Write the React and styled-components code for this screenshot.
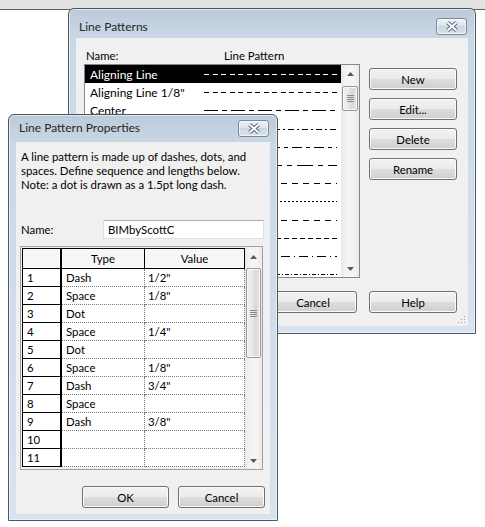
import React from "react";
import styled, { createGlobalStyle } from "styled-components";

const FONT = `"Lato", "Noto Sans", "Liberation Sans", sans-serif`;

const Global = createGlobalStyle`
  html, body { margin: 0; padding: 0; background: #fff; }
  body { width: 485px; height: 527px; overflow: hidden; font-family: ${FONT}; font-size: 11.4px; color: #000; }
  * { box-sizing: border-box; }
`;

const Desktop = styled.div`
  position: relative;
  width: 485px;
  height: 527px;
  background: #fff;
  overflow: hidden;
`;

const BackWindowEdge = styled.div`
  height: 10px;
  background: #e2e2e2;
  border-bottom: 1px solid #5e5e5e;
`;

const Window = styled.div`
  position: absolute;
  left: ${(p) => p.$x}px;
  top: ${(p) => p.$y}px;
  width: ${(p) => p.$w}px;
  height: ${(p) => p.$h}px;
  display: flex;
  flex-direction: column;
  border: 1px solid #4f5660;
  border-radius: 6px 6px 0 0;
  background: linear-gradient(#bccada, #cad7e5 28px, #d7e3ef 100%);
  box-shadow: inset 0 0 0 1px rgba(255, 255, 255, 0.5);
  padding: 0 7px 7px 7px;
`;

const TitleBar = styled.div`
  flex: none;
  height: ${(p) => p.$h}px;
  display: flex;
  align-items: flex-start;
  padding: ${(p) => p.$pt}px 1px 0 3px;
`;

const Title = styled.div`
  flex: 1;
  margin-top: ${(p) => p.$mt || 0}px;
  line-height: 16px;
  font-size: 12px;
  color: #262626;
  white-space: nowrap;
`;

const CloseButton = styled.div`
  width: 31px;
  height: 17px;
  border: 1px solid #7a8799;
  border-radius: 3px;
  background: linear-gradient(#eef2f7, #dde4ed 45%, #ccd6e2 50%, #dbe3ec);
  box-shadow: inset 0 0 0 1px rgba(255, 255, 255, 0.6);
  display: flex;
  align-items: center;
  justify-content: center;
`;

const Client = styled.div`
  position: relative;
  flex: 1;
  background: #f0f0f0;
  display: flex;
  flex-direction: column;
  padding: ${(p) => p.$pad};
`;

const TopArea = styled.div`
  display: flex;
  gap: 9px;
`;

const LeftCol = styled.div`
  width: 276px;
  display: flex;
  flex-direction: column;
`;

const LabelRow = styled.div`
  height: 15px;
  line-height: 14px;
  display: flex;
`;

const ColLabel = styled.div`
  width: ${(p) => p.$w || "auto"};
  padding-left: ${(p) => p.$pl || 0}px;
  white-space: nowrap;
`;

const ListBox = styled.div`
  height: 214px;
  border: 1px solid #828790;
  background: #fff;
  display: flex;
  overflow: hidden;
`;

const ListRows = styled.div`
  flex: 1;
  overflow: hidden;
`;

const ListRow = styled.div`
  height: 18.2px;
  display: flex;
  align-items: center;
  background: ${(p) => (p.$sel ? "#000" : "transparent")};
  color: ${(p) => (p.$sel ? "#fff" : "#000")};
`;

const RowName = styled.div`
  width: 119px;
  padding-left: 5px;
  white-space: nowrap;
  overflow: hidden;
  font-size: 12px;
`;

const RightCol = styled.div`
  padding-top: 19px;
  display: flex;
  flex-direction: column;
  gap: 8px;
`;

const Button = styled.div`
  width: ${(p) => p.$w || 88}px;
  height: 22px;
  border: 1px solid #707070;
  border-radius: 3px;
  background: linear-gradient(#f2f2f2 0%, #ebebeb 48%, #dddddd 52%, #cfcfcf 100%);
  box-shadow: inset 0 0 0 1px #fbfbfb;
  display: flex;
  align-items: center;
  justify-content: center;
  color: #000;
`;

const BottomRow = styled.div`
  margin-top: ${(p) => p.$mt}px;
  margin-right: ${(p) => p.$mr || 0}px;
  display: flex;
  justify-content: flex-end;
  gap: ${(p) => p.$gap}px;
`;

const Grip = styled.svg`
  position: absolute;
  right: 2px;
  bottom: 2px;
`;

/* Scrollbar */
const ScrollBar = styled.div`
  width: ${(p) => p.$w}px;
  flex: none;
  display: flex;
  flex-direction: column;
  padding-top: ${(p) => p.$pt || 0}px;
  background: linear-gradient(to right, #e9e9e9, #f4f4f4 30%, #f4f4f4 70%, #e9e9e9);
`;

const ArrowBox = styled.div`
  height: 17px;
  flex: none;
  display: flex;
  align-items: center;
  justify-content: center;
`;

const Track = styled.div`
  flex: 1;
  padding: 0 1px;
`;

const Thumb = styled.div`
  margin-top: ${(p) => p.$top}px;
  height: ${(p) => p.$h}px;
  border: 1px solid #979797;
  border-radius: 2px;
  background: linear-gradient(to right, #f1f1f1, #e6e6e6 50%, #d9d9d9 51%, #e2e2e2);
  box-shadow: inset 0 0 0 1px #fafafa;
  display: flex;
  align-items: center;
  justify-content: center;
`;

const Arrow = ({ up }) => (
  <svg width="7" height="4" viewBox="0 0 7 4">
    <path d={up ? "M0 4 L3.5 0 L7 4 Z" : "M0 0 L3.5 4 L7 0 Z"} fill="#5a5a5a" />
  </svg>
);

const GripLines = () => (
  <svg width="7" height="7" viewBox="0 0 7 7">
    {[0.5, 2.5, 4.5, 6.5].map((y) => (
      <line key={y} x1="0" x2="7" y1={y} y2={y} stroke="#8a8a8a" strokeWidth="1" />
    ))}
  </svg>
);

const Scroll = ({ w, pt, thumbTop, thumbH }) => (
  <ScrollBar $w={w} $pt={pt}>
    <ArrowBox>
      <Arrow up />
    </ArrowBox>
    <Track>
      <Thumb $top={thumbTop} $h={thumbH}>
        <GripLines />
      </Thumb>
    </Track>
    <ArrowBox>
      <Arrow />
    </ArrowBox>
  </ScrollBar>
);

/* LPP parts */
const Desc = styled.div`
  line-height: 14px;
  white-space: nowrap;
`;

const NameRow = styled.div`
  margin-top: 28px;
  height: 19px;
  display: flex;
  align-items: center;
`;

const NameLabel = styled.div`
  width: 82px;
`;

const TextInput = styled.div`
  width: 161px;
  height: 19px;
  border: 1px solid #dbdfe6;
  border-top-color: #abadb3;
  background: #fff;
  padding-left: 4px;
  line-height: 17px;
`;

const Grid = styled.div`
  margin-top: 7px;
  margin-left: -1px;
  width: 243px;
  height: 224px;
  border: 1px solid #a0a0a0;
  background: #f0f0f0;
  display: flex;
`;

const Table = styled.div`
  flex: 1;
  padding: 1px 0 0 1px;
  display: grid;
  grid-template-columns: 40px 83px 100px;
  grid-template-rows: 21px repeat(11, 18px);
  align-content: start;
`;

const HeadCell = styled.div`
  background: #f7f7f7;
  border-top: 1px solid #000;
  border-bottom: 1px solid #000;
  border-right: ${(p) => (p.$corner ? 2 : 1)}px solid #000;
  border-left: ${(p) => (p.$corner ? "1px solid #000" : "none")};
  display: flex;
  align-items: center;
  justify-content: center;
`;

const RowHead = styled.div`
  background: #fff;
  border-left: 1px solid #000;
  border-right: 2px solid #000;
  border-bottom: 1px solid #000;
  padding-left: 4px;
  display: flex;
  align-items: center;
`;

const DataCell = styled.div`
  background: #fff;
  border-right: 1px dotted #7a7a7a;
  border-bottom: 1px dotted #7a7a7a;
  padding-left: ${(p) => p.$pl}px;
  display: flex;
  align-items: center;
  white-space: nowrap;
`;

const CloseGlyph = () => (
  <svg width="14" height="11" viewBox="0 0 14 11">
    <path d="M2.5 1.5 L11.5 9.5 M11.5 1.5 L2.5 9.5" stroke="#5f6a7a" strokeWidth="4" />
    <path d="M2.5 1.5 L11.5 9.5 M11.5 1.5 L2.5 9.5" stroke="#fdfdfd" strokeWidth="2" />
  </svg>
);

const PatternLine = ({ dash, sel }) => (
  <svg width="133" height="18" viewBox="0 0 133 18" shapeRendering="crispEdges">
    <line x1="0" x2="133" y1="9.5" y2="9.5" stroke={sel ? "#fff" : "#000"} strokeWidth="1" strokeDasharray={dash} />
  </svg>
);

const patterns = [
  { name: "Aligning Line", dash: "5 3.5", sel: true },
  { name: 'Aligning Line 1/8"', dash: "5 3.5" },
  { name: "Center", dash: "14 4 5 4" },
  { name: 'Center 1/4"', dash: "6 3 2 3" },
  { name: 'Center 3/4"', dash: "10 4 4 4" },
  { name: "Dash", dash: "16 5 5 5" },
  { name: 'Dash 1/16"', dash: "6 5" },
  { name: "Dot", dash: "2 2" },
  { name: 'Dash 1/4"', dash: "6 5" },
  { name: 'Dash 3/32"', dash: "5 3" },
  { name: "Dash dot", dash: "1 4 9 4" },
  { name: "Dash dot dot", dash: "4 2 1 2" },
];

const segments = [
  ["Dash", '1/2"'],
  ["Space", '1/8"'],
  ["Dot", ""],
  ["Space", '1/4"'],
  ["Dot", ""],
  ["Space", '1/8"'],
  ["Dash", '3/4"'],
  ["Space", ""],
  ["Dash", '3/8"'],
  ["", ""],
  ["", ""],
];

export default function App() {
  return (
    <Desktop>
      <Global />
      <BackWindowEdge />

      <Window $x={68} $y={8} $w={408} $h={326}>
        <TitleBar $h={29} $pt={9}>
          <Title $mt={1}>Line Patterns</Title>
          <CloseButton>
            <CloseGlyph />
          </CloseButton>
        </TitleBar>
        <Client $pad="11px 11px 0 8px">
          <TopArea>
            <LeftCol>
              <LabelRow>
                <ColLabel $w="140px" $pl={2}>Name:</ColLabel>
                <ColLabel>Line Pattern</ColLabel>
              </LabelRow>
              <ListBox>
                <ListRows>
                  {patterns.map((p) => (
                    <ListRow key={p.name} $sel={p.sel}>
                      <RowName>{p.name}</RowName>
                      <PatternLine dash={p.dash} sel={p.sel} />
                    </ListRow>
                  ))}
                </ListRows>
                <Scroll w={18} thumbTop={4} thumbH={25} />
              </ListBox>
            </LeftCol>
            <RightCol>
              <Button>New</Button>
              <Button>Edit...</Button>
              <Button>Delete</Button>
              <Button>Rename</Button>
            </RightCol>
          </TopArea>
          <BottomRow $mt={13} $gap={12}>
            <Button>OK</Button>
            <Button>Cancel</Button>
            <Button>Help</Button>
          </BottomRow>
          <Grip width="10" height="10" viewBox="0 0 10 10">
            {[
              [8, 2],
              [8, 5],
              [5, 5],
              [8, 8],
              [5, 8],
              [2, 8],
            ].map(([x, y]) => (
              <rect key={`${x}-${y}`} x={x} y={y} width="1" height="1" fill="#a0a0a0" />
            ))}
          </Grip>
        </Client>
      </Window>

      <Window $x={8} $y={114} $w={270} $h={407}>
        <TitleBar $h={27} $pt={5}>
          <Title>Line Pattern Properties</Title>
          <CloseButton>
            <CloseGlyph />
          </CloseButton>
        </TitleBar>
        <Client $pad="8px 6px 6px 5px">
          <Desc>
            A line pattern is made up of dashes, dots, and
            <br />
            spaces. Define sequence and lengths below.
            <br />
            Note: a dot is drawn as a 1.5pt long dash.
          </Desc>
          <NameRow>
            <NameLabel>Name:</NameLabel>
            <TextInput>BIMbyScottC</TextInput>
          </NameRow>
          <Grid>
            <Table>
              <HeadCell $corner />
              <HeadCell>Type</HeadCell>
              <HeadCell>Value</HeadCell>
              {segments.map(([type, value], i) => (
                <React.Fragment key={i}>
                  <RowHead>{i + 1}</RowHead>
                  <DataCell $pl={4}>{type}</DataCell>
                  <DataCell $pl={3}>{value}</DataCell>
                </React.Fragment>
              ))}
            </Table>
            <Scroll w={17} pt={1} thumbTop={3} thumbH={90} />
          </Grid>
          <BottomRow $mt={16} $gap={9} $mr={-1}>
            <Button $w={87}>OK</Button>
            <Button $w={87}>Cancel</Button>
          </BottomRow>
        </Client>
      </Window>
    </Desktop>
  );
}
